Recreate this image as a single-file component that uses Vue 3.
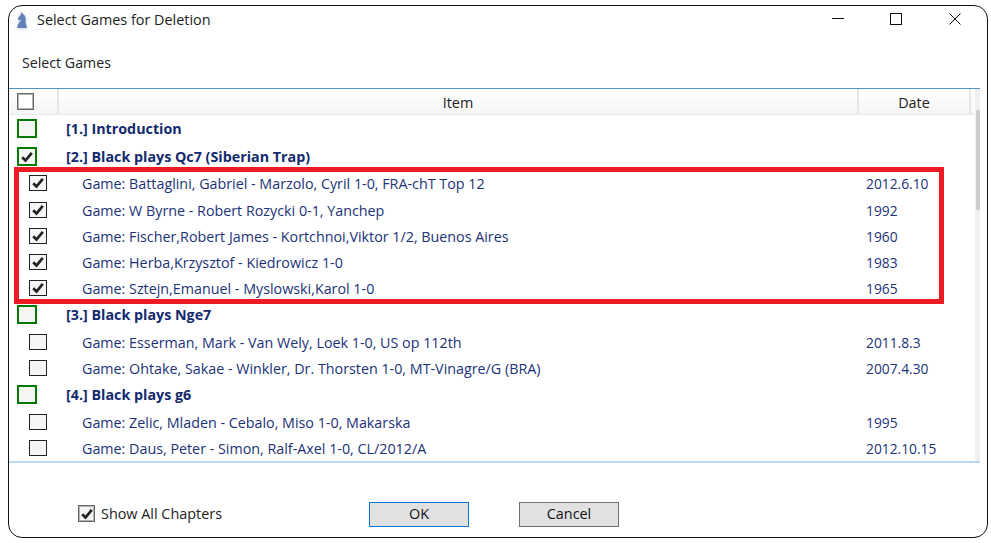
<script setup>
const rows = [
  { type: 'ch', h: 28, label: '[1.] Introduction', on: false },
  { type: 'ch', h: 28, label: '[2.] Black plays Qc7 (Siberian Trap)', on: true },
  { type: 'g', h: 26.5, label: 'Game: Battaglini, Gabriel - Marzolo, Cyril 1-0, FRA-chT Top 12', date: '2012.6.10', on: true },
  { type: 'g', h: 26.5, label: 'Game: W Byrne - Robert Rozycki 0-1, Yanchep', date: '1992', on: true },
  { type: 'g', h: 26, label: 'Game: Fischer,Robert James - Kortchnoi,Viktor 1/2, Buenos Aires', date: '1960', on: true },
  { type: 'g', h: 26, label: 'Game: Herba,Krzysztof - Kiedrowicz 1-0', date: '1983', on: true },
  { type: 'g', h: 25, label: 'Game: Sztejn,Emanuel - Myslowski,Karol 1-0', date: '1965', on: true },
  { type: 'ch', h: 29, label: '[3.] Black plays Nge7', on: false },
  { type: 'g', h: 26, label: 'Game: Esserman, Mark - Van Wely, Loek 1-0, US op 112th', date: '2011.8.3', on: false },
  { type: 'g', h: 25, label: 'Game: Ohtake, Sakae - Winkler, Dr. Thorsten 1-0, MT-Vinagre/G (BRA)', date: '2007.4.30', on: false },
  { type: 'ch', h: 29, label: '[4.] Black plays g6', on: false },
  { type: 'g', h: 26, label: 'Game: Zelic, Mladen - Cebalo, Miso 1-0, Makarska', date: '1995', on: false },
  { type: 'g', h: 26, label: 'Game: Daus, Peter - Simon, Ralf-Axel 1-0, CL/2012/A', date: '2012.10.15', on: false },
]
</script>

<template>
  <div class="page">
    <div class="window">
      <div class="titlebar">
        <svg class="logo" width="10" height="17" viewBox="0 0 10 17"><path d="M4.5 0 L6 2 C8.2 3.2 9.2 6.5 8.6 9.5 L9 12 L10 16 L0 16 L1 12.5 C2 10 4 9 4 7.5 L1.8 8.4 L0.8 6.6 L3.5 3 Z" fill="#6480b8"/></svg>
        <span class="title">Select Games for Deletion</span>
        <div class="controls">
          <svg width="12" height="12" viewBox="0 0 12 12"><path d="M0 5.5H12" stroke="#111" fill="none"/></svg>
          <svg width="12" height="12" viewBox="0 0 12 12"><rect x=".5" y=".5" width="11" height="11" stroke="#111" fill="none"/></svg>
          <svg class="close" width="12" height="12" viewBox="0 0 12 12"><path d="M.5 .5L11.5 11.5M11.5 .5L.5 11.5" stroke="#111" fill="none"/></svg>
        </div>
      </div>
      <div class="subtitle">Select Games</div>
      <div class="grid">
        <div class="main">
          <div class="head">
            <div class="head-check"><span class="box grey"></span></div>
            <div class="head-item">Item</div>
            <div class="head-date">Date</div>
          </div>
          <div class="list">
            <div v-for="r in rows" :key="r.label" class="row" :class="r.type" :style="{ height: r.h + 'px' }">
              <span class="box" :class="r.type === 'ch' ? 'green' : 'black'">
                <svg v-if="r.on" width="14" height="12" viewBox="0 0 14 12"><path d="M2.2 6.2L5.5 9.5L11.8 1.8" stroke="#222" stroke-width="2.7" fill="none"/></svg>
              </span>
              <span class="label">{{ r.label }}</span>
              <span v-if="r.date" class="date">{{ r.date }}</span>
            </div>
          </div>
        </div>
        <div class="scroll"><div class="thumb"></div></div>
      </div>
      <div class="footer">
        <label class="show">
          <span class="box grey small">
            <svg width="14" height="12" viewBox="0 0 14 12"><path d="M2.2 6.2L5.5 9.5L11.8 1.8" stroke="#222" stroke-width="2.7" fill="none"/></svg>
          </span>
          Show All Chapters
        </label>
        <button class="btn ok">OK</button>
        <button class="btn">Cancel</button>
      </div>
      <div class="highlight"></div>
    </div>
  </div>
</template>

<style scoped>
.page { width: 991px; height: 543px; padding: 5px 3px 5px 8px; box-sizing: border-box; background: #fff; font-family: "Open Sans", "Noto Sans", sans-serif; font-size: 14.4px; overflow: hidden; }
.window { position: relative; width: 980px; height: 533px; box-sizing: border-box; border: 1px solid #111; border-radius: 14px; background: #fff; display: flex; flex-direction: column; }
.titlebar { height: 26px; display: flex; align-items: center; flex: none; color: #222; }
.logo { margin-left: 8px; margin-top: 3px; filter: drop-shadow(0 1px 2px #c9d4ea); }
.title { margin-left: 10px; }
.controls { margin-left: auto; display: flex; gap: 46px; padding-right: 26px; }
.close { margin-left: 1px; }
.subtitle { height: 56px; flex: none; padding-left: 13px; line-height: 61px; color: #222; box-sizing: border-box; font-size: 14.2px; }
.grid { height: 375px; flex: none; border-top: 1px solid #4f94c4; border-bottom: 2px solid #bcd9ee; box-sizing: border-box; margin-right: 7px; display: flex; }
.main { flex: 1; min-width: 0; display: flex; flex-direction: column; }
.head { height: 26px; flex: none; display: flex; background: linear-gradient(#fff, #f5f5f5); border-bottom: 1px solid #e8e8e8; box-sizing: border-box; color: #222; margin-right: 1px; }
.head-check { width: 48px; display: flex; align-items: center; padding-left: 8px; box-sizing: border-box; }
.head-item { width: 800px; text-align: center; border-left: 2px solid #e6e6e6; line-height: 28px; box-sizing: border-box; }
.head-date { width: 114px; text-align: center; border-left: 2px solid #e6e6e6; border-right: 2px solid #e6e6e6; line-height: 28px; box-sizing: border-box; }
.list { flex: 1; overflow: hidden; min-height: 0; }
.row { display: flex; align-items: flex-start; color: #1c3278; white-space: nowrap; box-sizing: border-box; }
.row.ch { font-weight: 700; font-size: 14.3px; color: #142a6e; padding: 4px 0 0 8px; }
.row.g { font-size: 14.3px; padding: 4px 0 0 20px; }
.row.ch .label { margin-left: 29px; line-height: 19px; }
.row.g .label { margin-left: 35px; width: 784px; margin-top: -1px; line-height: 19px; }
.date { line-height: 19px; margin-top: -1px; font-size: 13.8px; }
.box { display: flex; align-items: center; justify-content: center; box-sizing: border-box; background: #f5f5f5; flex: none; }
.box.grey { width: 17px; height: 17px; border: 1px solid #666; background: #fff; box-shadow: inset 0 0 0 1px #b5b5b5; }
.box.green { width: 20px; height: 19px; border: 2px solid #007a00; }
.box.black { width: 18px; height: 16px; border: 1px solid #222; }
.box.small { background: #f3f3f3; }
.scroll { width: 5px; flex: none; background: #f0f0f0; position: relative; }
.thumb { position: absolute; left: 1px; width: 4px; top: 21px; height: 100px; background: #cdcdcd; }
.footer { flex: 1; display: flex; align-items: flex-end; padding: 0 0 10px 69px; position: relative; color: #222; box-sizing: border-box; }
.show { display: flex; align-items: center; gap: 6px; width: 291px; height: 25px; margin-bottom: 1px; }
.btn { width: 100px; height: 25px; margin-right: 50px; background: #e1e1e1; border: 1px solid #707070; font: inherit; color: #111; padding: 0 0 2px; }
.btn.ok { border-color: #0a78d4; }
.highlight { position: absolute; left: 5px; top: 161px; width: 930px; height: 137px; box-sizing: border-box; border: 5px solid #ed1c24; pointer-events: none; }
</style>
